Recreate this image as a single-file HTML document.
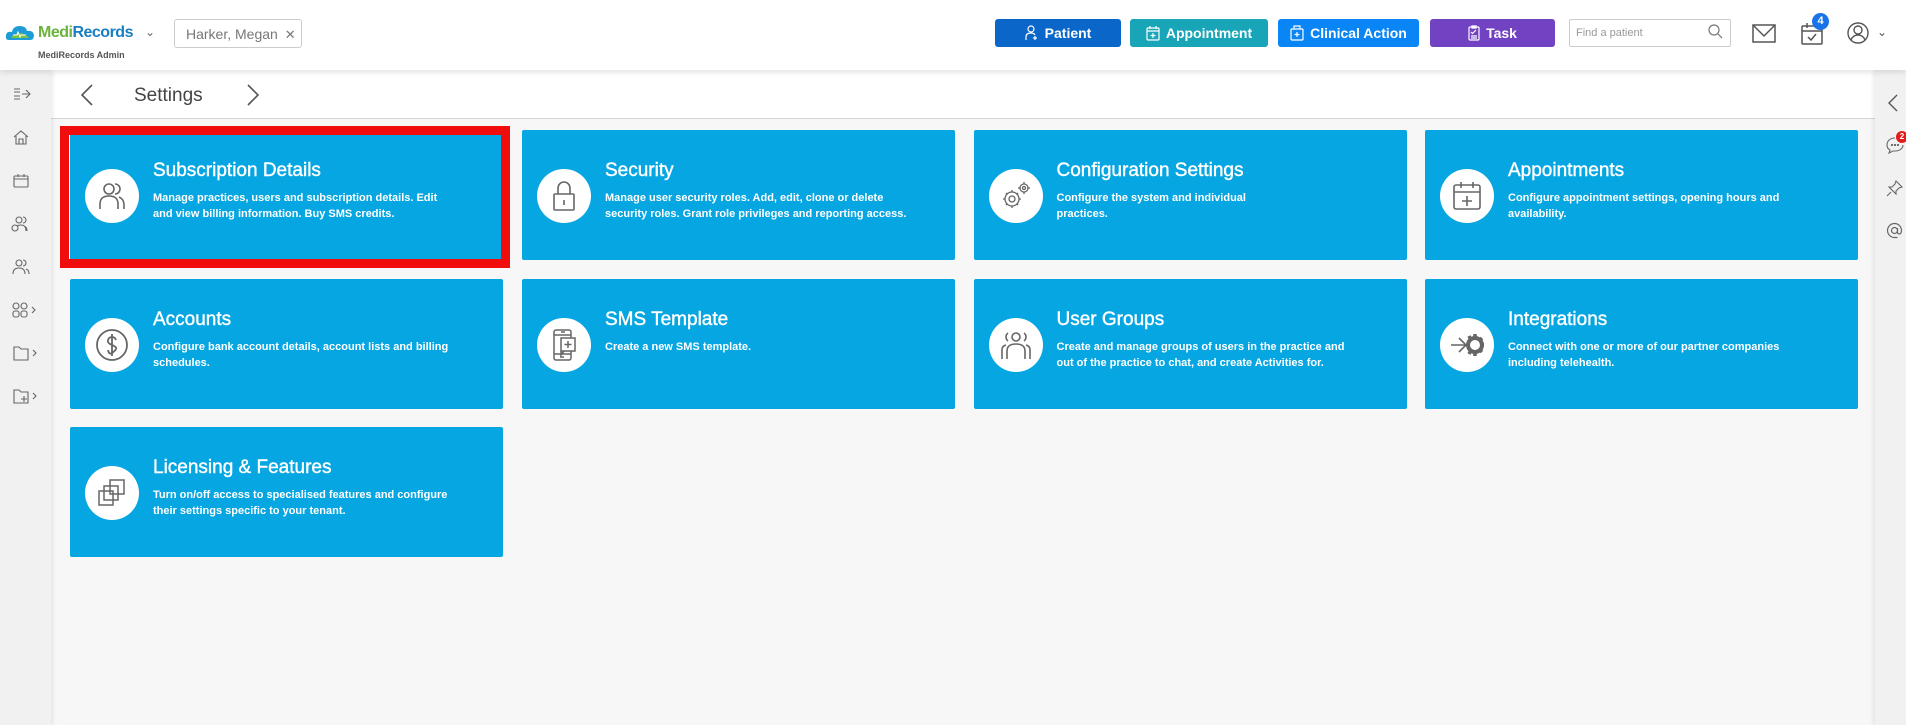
<!DOCTYPE html>
<html><head><meta charset="utf-8"><style>
*{box-sizing:border-box;margin:0;padding:0}
body{width:1906px;height:725px;overflow:hidden;background:#f7f7f7;font-family:"Liberation Sans",sans-serif;position:relative}
.hdr{position:absolute;left:0;top:0;width:1906px;height:70px;background:#fff;box-shadow:0 2px 6px rgba(0,0,0,.12);z-index:5}
.abs{position:absolute}
.btn{position:absolute;top:19px;height:28px;border-radius:3px;color:#fff;font-size:14px;font-weight:bold;display:flex;align-items:center;justify-content:center;gap:6px}
.lsb{position:absolute;left:0;top:70px;width:51px;height:655px;background:#f1f1f1;box-shadow:2px 0 4px rgba(0,0,0,.08);z-index:3}
.rsb{position:absolute;left:1875px;top:70px;width:31px;height:655px;background:#f1f1f1;box-shadow:-2px 0 4px rgba(0,0,0,.08);z-index:3}
.bar{position:absolute;left:51px;top:70px;width:1824px;height:49px;background:#fff;border-bottom:1px solid #d4d4d4}
.card{position:absolute;width:433px;height:130px;background:#06a6e2;border-radius:2px;color:#fff}
.card .ic{position:absolute;left:15px;top:39px;width:54px;height:54px;border-radius:50%;background:#fff;display:flex;align-items:center;justify-content:center}
.card h3{position:absolute;left:83px;top:30px;font-size:19px;font-weight:normal;white-space:nowrap;-webkit-text-stroke:0.4px #fff}
.card p{position:absolute;left:83px;top:60px;font-size:11px;font-weight:bold;line-height:16px;white-space:nowrap}
svg{display:block}
</style></head><body>
<div class="hdr">
  <svg class="abs" style="left:5px;top:24px" width="30" height="18" viewBox="0 0 30 18"><path d="M4 16 Q0 16 1 11 Q2 7 7 8 Q8 2 15 2 Q21 2 22 7 Q28 6 29 11 Q29 16 25 16Z" fill="#1c9bd7"/><path d="M6 14 Q8 10 14 9 Q20 9 24 14Z" fill="#7cc242"/><path d="M8 11h4l1-3 2 5 1-2h5" stroke="#fff" stroke-width="1" fill="none"/></svg>
  <div class="abs" style="left:38px;top:24px;font-size:16px;font-weight:bold;letter-spacing:-0.5px"><span style="color:#6ab43e">Medi</span><span style="color:#1a7fc1">Records</span></div>
  <div class="abs" style="left:145px;top:25px;color:#666;font-size:12px">&#8964;</div>
  <div class="abs" style="left:38px;top:50px;font-size:9px;color:#555;font-weight:bold">MediRecords Admin</div>
  <div class="abs" style="left:174px;top:19px;width:128px;height:29px;border:1px solid #ccc;border-radius:3px;color:#777;font-size:14px;padding:6px 0 0 11px">Harker, Megan <span style="font-size:13px;margin-left:3px">✕</span></div>
  <div class="btn" style="left:995px;width:126px;background:#0a67c9"><svg width="14" height="16" viewBox="0 0 14 16" fill="none" stroke="#fff" stroke-width="1.2"><circle cx="6" cy="4" r="3"/><path d="M1 15v-3q0-4 5-4 3 0 4 2M10 11v4M8 13h4"/></svg>Patient</div>
  <div class="btn" style="left:1130px;width:138px;background:#17a5b7"><svg width="14" height="16" viewBox="0 0 14 16" fill="none" stroke="#fff" stroke-width="1.2"><rect x="1" y="3" width="12" height="12" rx="1"/><path d="M4 1v3M10 1v3M1 6h12M7 8v5M4.5 10.5h5"/></svg>Appointment</div>
  <div class="btn" style="left:1278px;width:141px;background:#0a85f5"><svg width="14" height="16" viewBox="0 0 14 16" fill="none" stroke="#fff" stroke-width="1.2"><rect x="1" y="4" width="12" height="11" rx="1"/><path d="M4 4V1h6v3M7 7v5M4.5 9.5h5"/></svg>Clinical Action</div>
  <div class="btn" style="left:1430px;width:125px;background:#7142c2"><svg width="12" height="16" viewBox="0 0 12 16" fill="none" stroke="#fff" stroke-width="1.2"><rect x="1" y="2" width="10" height="13" rx="1"/><path d="M4 1h4v2H4zM3 7l1.5 1.5L8 5M3 11h6M3 13h6"/></svg>Task</div>
  <div class="abs" style="left:1569px;top:19px;width:162px;height:28px;border:1px solid #ccc;border-radius:2px;color:#999;font-size:11px;padding:7px 0 0 6px">Find a patient</div>
  <svg class="abs" style="left:1708px;top:24px" width="15" height="15" viewBox="0 0 15 15" fill="none" stroke="#777" stroke-width="1.2"><circle cx="6" cy="6" r="5"/><path d="M10 10l4 4"/></svg>
  <svg class="abs" style="left:1752px;top:24px" width="24" height="19" viewBox="0 0 24 19" fill="none" stroke="#555" stroke-width="1.5"><rect x="1" y="1" width="22" height="17"/><path d="M1 1l11 11L23 1"/></svg>
  <svg class="abs" style="left:1801px;top:22px" width="22" height="23" viewBox="0 0 22 23" fill="none" stroke="#555" stroke-width="1.5"><rect x="1" y="4" width="20" height="18" rx="1"/><path d="M6 1v5M16 1v5M1 9h20M7 15l3 3 5-6"/></svg>
  <div class="abs" style="left:1812px;top:13px;width:17px;height:17px;border-radius:50%;background:#1a73e8;color:#fff;font-size:11px;text-align:center;line-height:17px;font-weight:bold">4</div>
  <svg class="abs" style="left:1847px;top:22px" width="22" height="22" viewBox="0 0 22 22" fill="none" stroke="#555" stroke-width="1.4"><circle cx="11" cy="11" r="10"/><circle cx="11" cy="8" r="4"/><path d="M4 18q2-5 7-5t7 5"/></svg>
  <div class="abs" style="left:1877px;top:25px;color:#555;font-size:12px">&#8964;</div>
</div>
<div class="lsb">
 <svg class="abs" style="left:13px;top:17px" width="18" height="14" viewBox="0 0 18 14" fill="none" stroke="#666" stroke-width="1.1"><path d="M1 2h6M1 5h6M1 9h6M1 12h6M9 7h8M13 3l4 4-4 4"/></svg>
 <svg class="abs" style="left:13px;top:60px" width="16" height="15" viewBox="0 0 16 15" fill="none" stroke="#666" stroke-width="1.1"><path d="M1 7L8 1l7 6M3 6v8h10V6M6 14v-5h4v5"/></svg>
 <svg class="abs" style="left:13px;top:103px" width="16" height="15" viewBox="0 0 16 15" fill="none" stroke="#666" stroke-width="1.1"><rect x="1" y="3" width="14" height="11" rx="1"/><path d="M5 1v3M11 1v3M1 6h14"/></svg>
 <svg class="abs" style="left:11px;top:146px" width="18" height="16" viewBox="0 0 18 16" fill="none" stroke="#666" stroke-width="1.1"><circle cx="8" cy="4" r="3"/><path d="M12 1a3 3 0 010 6M4 15q0-6 6-6 5 0 5 6M16 15q0-4-3-5"/><circle cx="4" cy="12" r="3" fill="#f1f1f1"/></svg>
 <svg class="abs" style="left:12px;top:189px" width="18" height="16" viewBox="0 0 18 16" fill="none" stroke="#666" stroke-width="1.1"><circle cx="7" cy="4" r="3"/><path d="M11 1a3 3 0 010 6M1 15q0-6 6-6t6 6M17 15q0-4-3-5"/></svg>
 <svg class="abs" style="left:12px;top:232px" width="26" height="16" viewBox="0 0 26 16" fill="none" stroke="#666" stroke-width="1.1"><circle cx="4" cy="4" r="3"/><circle cx="12" cy="4" r="3"/><rect x="1" y="9" width="6" height="6" rx="2"/><rect x="9" y="9" width="6" height="6" rx="2"/><path d="M20 5l3 3-3 3"/></svg>
 <svg class="abs" style="left:13px;top:275px" width="26" height="16" viewBox="0 0 26 16" fill="none" stroke="#666" stroke-width="1.1"><path d="M1 2h5l2 2h7v11H1z"/><path d="M20 5l3 3-3 3"/></svg>
 <svg class="abs" style="left:13px;top:318px" width="26" height="16" viewBox="0 0 26 16" fill="none" stroke="#666" stroke-width="1.1"><path d="M1 2h5l2 2h7v11H1z M11 8v6M8 11h6"/><path d="M20 5l3 3-3 3"/></svg>
</div>
<div class="bar">
 <svg class="abs" style="left:30px;top:14px" width="12" height="22" viewBox="0 0 12 22" fill="none" stroke="#555" stroke-width="1.6"><path d="M11 1L1 11l10 10"/></svg>
 <div class="abs" style="left:83px;top:15px;font-size:19px;color:#444">Settings</div>
 <svg class="abs" style="left:196px;top:14px" width="12" height="22" viewBox="0 0 12 22" fill="none" stroke="#555" stroke-width="1.6"><path d="M1 1l10 10L1 21"/></svg>
</div>
<div class="rsb">
 <svg class="abs" style="left:13px;top:24px" width="10" height="18" viewBox="0 0 10 18" fill="none" stroke="#555" stroke-width="1.4"><path d="M9 1L1 9l8 8"/></svg>
 <svg class="abs" style="left:11px;top:67px" width="18" height="17" viewBox="0 0 18 17" fill="none" stroke="#666" stroke-width="1.1"><path d="M9 1C4 1 1 4 1 8c0 2 1 4 3 5l-1 3 4-2c1 0 1 0 2 0 5 0 8-3 8-6"/><circle cx="6" cy="8" r=".6" fill="#666"/><circle cx="9" cy="8" r=".6" fill="#666"/><circle cx="12" cy="8" r=".6" fill="#666"/></svg>
 <div class="abs" style="left:21px;top:61px;width:12px;height:12px;border-radius:50%;background:#e51b1b;color:#fff;font-size:8px;font-weight:bold;text-align:center;line-height:12px">2</div>
 <svg class="abs" style="left:11px;top:110px" width="17" height="17" viewBox="0 0 17 17" fill="none" stroke="#666" stroke-width="1.1"><path d="M10 1l6 6-3 1-3 3 0 3-7-7 3 0 3-3z M5 12l-4 4"/></svg>
 <svg class="abs" style="left:11px;top:152px" width="17" height="17" viewBox="0 0 17 17" fill="none" stroke="#666" stroke-width="1.2"><circle cx="8.5" cy="8.5" r="3"/><path d="M11.5 6v4q0 2 2 2 2 0 2-4A7 7 0 108.5 15.5h3"/></svg>
</div>

<div class="abs" style="left:60px;top:126px;width:450px;height:142px;border:9px solid #f20d0d;z-index:2"></div>

<div class="card" style="left:70px;top:130px"><div class="ic"><svg width="30" height="30" viewBox="0 0 30 30" fill="none" stroke="#666" stroke-width="1.6"><circle cx="12" cy="8" r="5"/><path d="M18 3a5 5 0 010 10M3 28v-5q0-8 9-8t9 8v5M27 28v-4q0-6-5-8"/></svg></div><h3>Subscription Details</h3><p>Manage practices, users and subscription details. Edit<br>and view billing information. Buy SMS credits.</p></div>
<div class="card" style="left:522px;top:130px"><div class="ic"><svg width="30" height="32" viewBox="0 0 30 32" fill="none" stroke="#666" stroke-width="1.6"><rect x="5" y="14" width="20" height="16" rx="1"/><path d="M9 14V8a6 6 0 0112 0v6M15 20v5"/></svg></div><h3>Security</h3><p>Manage user security roles. Add, edit, clone or delete<br>security roles. Grant role privileges and reporting access.</p></div>
<div class="card" style="left:973.5px;top:130px"><div class="ic"><svg width="32" height="32" viewBox="0 0 32 32" fill="none" stroke="#666" stroke-width="1.3"><circle cx="12" cy="19" r="7"/><circle cx="12" cy="19" r="3"/><path d="M12 10v2M12 26v2M3 19h2M19 19h2M6 13l1.5 1.5M16.5 23.5L18 25M6 25l1.5-1.5M16.5 14.5L18 13"/><circle cx="24" cy="8" r="4"/><circle cx="24" cy="8" r="1.5"/><path d="M24 2v2M24 12v2M18 8h2M28 8h2"/></svg></div><h3>Configuration Settings</h3><p>Configure the system and individual<br>practices.</p></div>
<div class="card" style="left:1425px;top:130px"><div class="ic"><svg width="32" height="32" viewBox="0 0 32 32" fill="none" stroke="#666" stroke-width="1.6"><rect x="3" y="5" width="26" height="24" rx="2"/><path d="M10 2v6M22 2v6M3 12h26M16 16v10M11 21h10"/></svg></div><h3>Appointments</h3><p>Configure appointment settings, opening hours and<br>availability.</p></div>

<div class="card" style="left:70px;top:279px"><div class="ic"><svg width="36" height="36" viewBox="0 0 36 36" fill="none" stroke="#666" stroke-width="1.8"><circle cx="18" cy="18" r="15"/><path d="M22 13q-1-3-4-3t-4 3 4 5 4 4-4 4-4-3M18 7v22"/></svg></div><h3>Accounts</h3><p>Configure bank account details, account lists and billing<br>schedules.</p></div>
<div class="card" style="left:522px;top:279px"><div class="ic"><svg width="30" height="34" viewBox="0 0 30 34" fill="none" stroke="#666" stroke-width="1.5"><rect x="5" y="2" width="17" height="30" rx="2"/><path d="M5 7h17M5 26h17M12 4h4M11 29h4"/><rect x="12" y="10" width="14" height="13" fill="#fff"/><path d="M19 13v7M15.5 16.5h7M12 23v4l3-4"/></svg></div><h3>SMS Template</h3><p>Create a new SMS template.</p></div>
<div class="card" style="left:973.5px;top:279px"><div class="ic"><svg width="34" height="32" viewBox="0 0 34 32" fill="none" stroke="#666" stroke-width="1.6"><circle cx="17" cy="8" r="4"/><path d="M9 4a5 5 0 000 8M25 4a5 5 0 010 8M8 30v-8q0-7 9-7t9 7v8M3 30v-9q0-4 4-5M31 30v-9q0-4-4-5"/></svg></div><h3>User Groups</h3><p>Create and manage groups of users in the practice and<br>out of the practice to chat, and create Activities for.</p></div>
<div class="card" style="left:1425px;top:279px"><div class="ic"><svg width="36" height="32" viewBox="0 0 36 32" fill="none"><path d="M2 16h14M10 9l7 7-7 7" stroke="#666" stroke-width="1.6"/><circle cx="26" cy="16" r="7" stroke="#666" stroke-width="4"/><path d="M26 5v3M26 24v3M33 9l-2 2M33 23l-2-2M35 16h-3M21 9l-1-2M21 23l-1 2" stroke="#666" stroke-width="3.5"/></svg></div><h3>Integrations</h3><p>Connect with one or more of our partner companies<br>including telehealth.</p></div>

<div class="card" style="left:70px;top:427px"><div class="ic"><svg width="32" height="32" viewBox="0 0 32 32" fill="none" stroke="#666" stroke-width="1.5"><rect x="14" y="3" width="14" height="14"/><rect x="8" y="9" width="14" height="14"/><rect x="3" y="14" width="14" height="14"/></svg></div><h3>Licensing &amp; Features</h3><p>Turn on/off access to specialised features and configure<br>their settings specific to your tenant.</p></div>
</body></html>
